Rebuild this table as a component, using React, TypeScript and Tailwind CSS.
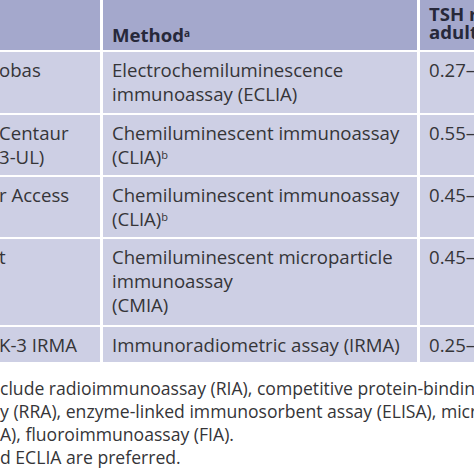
const font = { fontFamily: '"Open Sans", "Noto Sans", sans-serif' };

type Line = [string, string];

const rows: {
  device: Line[];
  method: React.ReactNode[];
  range: string;
  h: string;
}[] = [
  {
    device: [["Roche C", "obas"]],
    method: ["Electrochemiluminescence", "immunoassay (ECLIA)"],
    range: "0.27–4.20",
    h: "h-[61px]",
  },
  {
    device: [
      ["Siemens ADVIA ", "Centaur"],
      ["(TSH", "3-UL)"],
    ],
    method: [
      "Chemiluminescent immunoassay",
      <>
        (CLIA)<sup className="text-[11px]">b</sup>
      </>,
    ],
    range: "0.55–4.78",
    h: "h-[60px]",
  },
  {
    device: [["Beckman Coulte", "r Access"]],
    method: [
      "Chemiluminescent immunoassay",
      <>
        (CLIA)<sup className="text-[11px]">b</sup>
      </>,
    ],
    range: "0.45–4.50",
    h: "h-[60px]",
  },
  {
    device: [["Abbott Architec", "t"]],
    method: ["Chemiluminescent microparticle", "immunoassay", "(CMIA)"],
    range: "0.45–4.50",
    h: "h-[86px]",
  },
  {
    device: [["DiaSorin TSH-", "K-3 IRMA"]],
    method: ["Immunoradiometric assay (IRMA)"],
    range: "0.25–4.00",
    h: "h-[35px]",
  },
];

const notes: Line[] = [
  ["a Other methods in", "clude radioimmunoassay (RIA), competitive protein-binding assay (CPBA),"],
  ["(CPBA), radioreceptor assa", "y (RRA), enzyme-linked immunosorbent assay (ELISA), microparticle"],
  ["enzyme immunoassay (MEI", "A), fluoroimmunoassay (FIA)."],
  ["b CLIA an", "d ECLIA are preferred."],
];

function Cut({ line, w = "w-[200px]" }: { line: Line; w?: string }) {
  return (
    <div className="flex whitespace-nowrap">
      <span className={`${w} shrink-0 overflow-hidden text-right`}>{line[0]}</span>
      <span>{line[1]}</span>
    </div>
  );
}

export default function App() {
  return (
    <div className="w-[474px] h-[474px] overflow-hidden bg-white text-[#353538]" style={font}>
      <div className="ml-[-200px] grid w-[820px] grid-cols-[300px_314px_200px] gap-x-[3px] gap-y-[2px] text-[18.6px] leading-[24px]">
        <div className="h-[50px] bg-[#a4a8cc]" />
        <div className="flex h-[50px] items-end bg-[#a4a8cc] pb-[3px] pl-[9px] font-bold text-[#27283a]">
          <span>
            Method<sup className="text-[10px]">a</sup>
          </span>
        </div>
        <div className="flex h-[50px] flex-col justify-end bg-[#a4a8cc] pb-[9px] pl-[9px] font-bold leading-[18px] text-[#27283a] whitespace-nowrap">
          <span>TSH reference range in</span>
          <span>adults (mU/L)</span>
        </div>

        {rows.map((r, i) => (
          <div key={i} className="contents">
            <div className={`${r.h} bg-[#cdcfe4] pt-[6px]`}>
              {r.device.map((d, j) => (
                <Cut key={j} line={d} w="w-[199px]" />
              ))}
            </div>
            <div className={`${r.h} bg-[#cdcfe4] pl-[9px] pt-[6px]`}>
              {r.method.map((m, j) => (
                <div key={j} className="whitespace-nowrap">
                  {m}
                </div>
              ))}
            </div>
            <div className={`${r.h} bg-[#cdcfe4] pl-[9px] pt-[6px] whitespace-nowrap`}>{r.range}</div>
          </div>
        ))}
      </div>

      <div className="ml-[-200px] mt-[15px] text-[17.6px] leading-[23px]">
        {notes.map((n, i) => (
          <Cut key={i} line={n} />
        ))}
      </div>
    </div>
  );
}
